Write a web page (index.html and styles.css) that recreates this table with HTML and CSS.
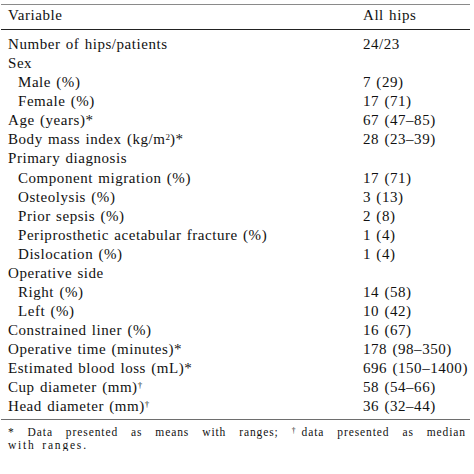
FILE: index.html
```html
<!DOCTYPE html>
<html>
<head>
<meta charset="utf-8">
<link rel="stylesheet" href="styles.css">
</head>
<body>
<div class="table">
  <div class="row head"><span>Variable</span><span>All hips</span></div>
  <div class="tbody">
    <div class="row"><span>Number of hips/patients</span><span>24/23</span></div>
    <div class="row"><span>Sex</span><span></span></div>
    <div class="row sub"><span>Male (%)</span><span>7 (29)</span></div>
    <div class="row sub"><span>Female (%)</span><span>17 (71)</span></div>
    <div class="row"><span>Age (years)*</span><span>67 (47–85)</span></div>
    <div class="row"><span>Body mass index (kg/m<sup>2</sup>)*</span><span>28 (23–39)</span></div>
    <div class="row"><span>Primary diagnosis</span><span></span></div>
    <div class="row sub"><span>Component migration (%)</span><span>17 (71)</span></div>
    <div class="row sub"><span>Osteolysis (%)</span><span>3 (13)</span></div>
    <div class="row sub"><span>Prior sepsis (%)</span><span>2 (8)</span></div>
    <div class="row sub"><span>Periprosthetic acetabular fracture (%)</span><span>1 (4)</span></div>
    <div class="row sub"><span>Dislocation (%)</span><span>1 (4)</span></div>
    <div class="row"><span>Operative side</span><span></span></div>
    <div class="row sub"><span>Right (%)</span><span>14 (58)</span></div>
    <div class="row sub"><span>Left (%)</span><span>10 (42)</span></div>
    <div class="row"><span>Constrained liner (%)</span><span>16 (67)</span></div>
    <div class="row"><span>Operative time (minutes)*</span><span>178 (98–350)</span></div>
    <div class="row"><span>Estimated blood loss (mL)*</span><span>696 (150–1400)</span></div>
    <div class="row"><span>Cup diameter (mm)<sup>†</sup></span><span>58 (54–66)</span></div>
    <div class="row"><span>Head diameter (mm)<sup>†</sup></span><span>36 (32–44)</span></div>
  </div>
  <p class="note"><span class="line1">* Data presented as means with ranges; <sup>†</sup>data presented as median</span><span class="line2">with ranges.</span></p>
</div>
</body>
</html>
```
FILE: styles.css
```css
html, body {
  margin: 0;
  padding: 0;
  background: #ffffff;
}

body {
  font-family: "Liberation Serif", "Times New Roman", serif;
  color: #111111;
}

.table {
  margin: 4px 4px 0 1px;
  width: 469px;
  border-top: 1px solid #8a8a8a;
}

.row {
  display: grid;
  grid-template-columns: 355px 1fr;
  padding-left: 7px;
  font-size: 15px;
  line-height: 19.05px;
  letter-spacing: 0.55px;
  word-spacing: 1px;
  white-space: nowrap;
}

.row.sub > span:first-child {
  padding-left: 10px;
}

.head {
  padding-top: 1px;
  padding-bottom: 4px;
  line-height: 19px;
  border-bottom: 1.5px solid #222;
}

.tbody {
  padding-top: 5.2px;
  padding-bottom: 3px;
  border-bottom: 1px solid #6e6e6e;
}

sup {
  font-size: 9px;
  line-height: 0;
  vertical-align: 0.45em;
  letter-spacing: 0;
}

.note {
  margin: 0;
  padding: 6px 4px 0 7px;
  font-size: 11.5px;
  line-height: 12.5px;
  letter-spacing: 1.8px;
  word-spacing: 2px;
}

.note sup {
  font-size: 7.5px;
  margin-right: -1px;
}

.note .line1 {
  display: block;
  text-align: justify;
  text-align-last: justify;
  white-space: nowrap;
  letter-spacing: 0.9px;
}

.note .line2 {
  display: block;
}
```
